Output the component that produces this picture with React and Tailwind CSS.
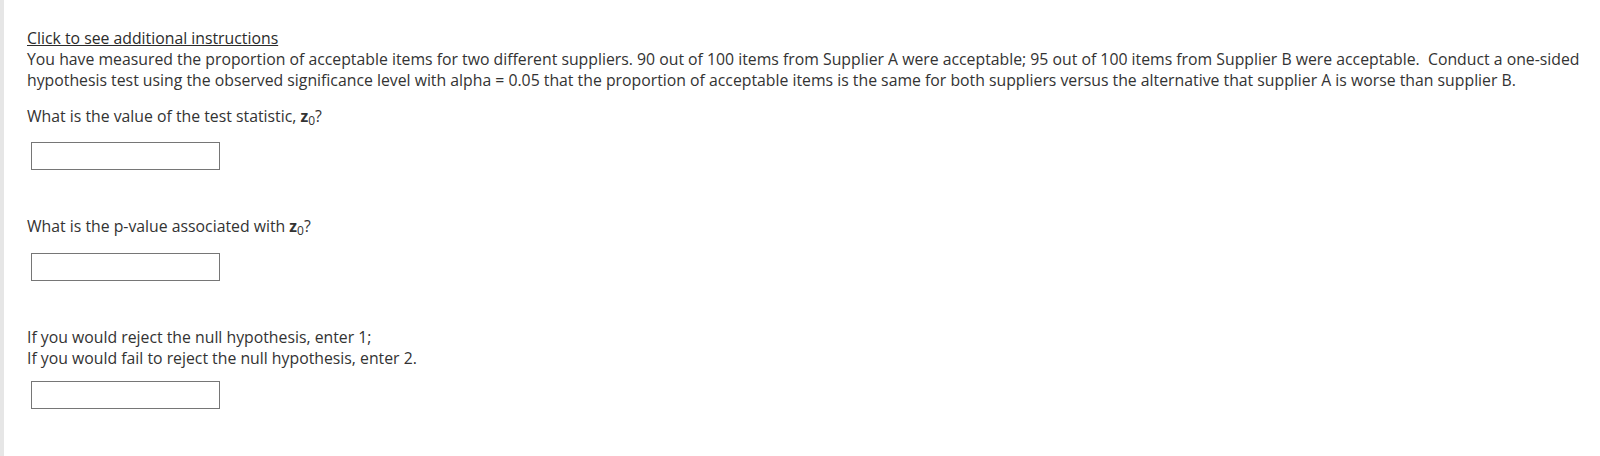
import React from "react";

const Z0 = () => (
  <>
    <b className="font-bold">z</b>
    <sub className="text-[12px]">0</sub>
  </>
);

const AnswerBox = ({ className = "" }) => (
  <input
    type="text"
    className={`block w-[189px] h-[28px] border border-[#767676] bg-white outline-none ${className}`}
  />
);

export default function App() {
  return (
    <div className="min-h-screen bg-white border-l-4 border-[#e6e6e6] pl-[23px] pr-[10px] pt-[28px] text-[15.8px] leading-[21px] text-[#333] font-['Open_Sans',sans-serif]">
      <div>
        <a href="#" className="underline text-[#2b2b2b]">
          Click to see additional instructions
        </a>
        <p>
          You have measured the proportion of acceptable items for two different suppliers. 90 out of 100 items from
          Supplier A were acceptable; 95 out of 100 items from Supplier B were acceptable.&nbsp; Conduct a one-sided
          hypothesis test using the observed significance level with alpha = 0.05 that the proportion of acceptable
          items is the same for both suppliers versus the alternative that supplier A is worse than supplier B.
        </p>
      </div>

      {/* Question 1 */}
      <p className="mt-[15px]">
        What is the value of the test statistic, <Z0 />?
      </p>
      <AnswerBox className="ml-[4px] mt-[15px]" />

      {/* Question 2 */}
      <p className="mt-[46px]">
        What is the p-value associated with <Z0 />?
      </p>
      <AnswerBox className="ml-[4px] mt-[16px]" />

      {/* Question 3 */}
      <p className="mt-[46px]">
        If you would reject the null hypothesis, enter 1;
        <br />
        If you would fail to reject the null hypothesis, enter 2.
      </p>
      <AnswerBox className="ml-[4px] mt-[12px]" />
    </div>
  );
}
